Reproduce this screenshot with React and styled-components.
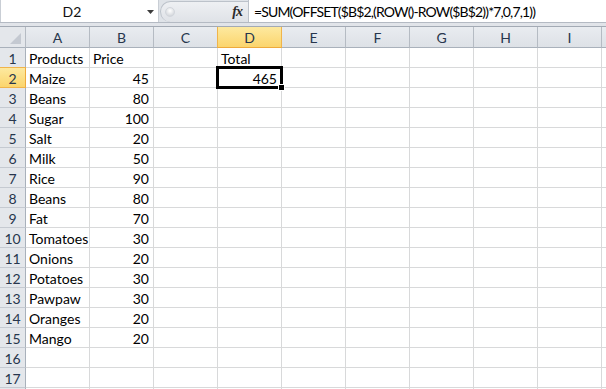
import React from 'react'
import styled, { createGlobalStyle } from 'styled-components'

const columns = ['A', 'B', 'C', 'D', 'E', 'F', 'G', 'H', 'I']

const rows = [
    { a: 'Products', b: 'Price', d: 'Total' },
    { a: 'Maize', b: 45, d: 465 },
    { a: 'Beans', b: 80 },
    { a: 'Sugar', b: 100 },
    { a: 'Salt', b: 20 },
    { a: 'Milk', b: 50 },
    { a: 'Rice', b: 90 },
    { a: 'Beans', b: 80 },
    { a: 'Fat', b: 70 },
    { a: 'Tomatoes', b: 30 },
    { a: 'Onions', b: 20 },
    { a: 'Potatoes', b: 30 },
    { a: 'Pawpaw', b: 30 },
    { a: 'Oranges', b: 20 },
    { a: 'Mango', b: 20 },
    {},
    {},
]

const activeCol = 'D'
const activeRow = 2

const App = () => {

    const cellValue = (row, col) => {
        if (col === 'A') return row.a
        if (col === 'B') return row.b
        if (col === 'D') return row.d
        return undefined
    }

    return (
        <>
            <Global />
            <Window>
                <FormulaBar>
                    <NameBox>
                        <NameText>D2</NameText>
                        <DropButton>
                            <svg width="7" height="4" viewBox="0 0 7 4">
                                <path d="M0 0 H7 L3.5 4 Z" fill="#3c3c3c" />
                            </svg>
                        </DropButton>
                    </NameBox>
                    <Splitter>
                        <Grip />
                        <Fx>fx</Fx>
                    </Splitter>
                    <FormulaInput>=SUM(OFFSET($B$2,(ROW()-ROW($B$2))*7,0,7,1))</FormulaInput>
                </FormulaBar>
                <Strip />
                <Sheet>
                    <Corner>
                        <svg width="11" height="11" viewBox="0 0 11 11">
                            <path d="M11 0 V11 H0 Z" fill="#c4c9d1" />
                        </svg>
                    </Corner>
                    {columns.map(col => (
                        <ColHeader key={col} $active={col === activeCol}>{col}</ColHeader>
                    ))}
                    <ColHeader />
                    {rows.map((row, i) => (
                        <React.Fragment key={i}>
                            <RowHeader $active={i + 1 === activeRow}>{i + 1}</RowHeader>
                            {columns.map(col => {
                                const value = cellValue(row, col)
                                return (
                                    <Cell key={col} $right={typeof value === 'number'}>
                                        {value}
                                    </Cell>
                                )
                            })}
                            <Cell />
                        </React.Fragment>
                    ))}
                    {/* partly visible row below 17 */}
                    <RowHeader />
                    {columns.map(col => <Cell key={col} />)}
                    <Cell />
                    <Selection>
                        <FillHandle />
                    </Selection>
                </Sheet>
            </Window>
        </>
    )
}

export default App

const Global = createGlobalStyle`
    html, body {
        margin: 0;
        padding: 0;
        background: #ffffff;
        overflow: hidden;
    }
    * {
        box-sizing: border-box;
    }
`
const Window = styled.div`
    width: 606px;
    height: 389px;
    overflow: hidden;
    font-family: Lato, "Liberation Sans", sans-serif;
    font-size: 14px;
    color: #000000;
    background: #ffffff;
`
const FormulaBar = styled.div`
    display: flex;
    height: 23px;
    background: #dfe3e8;
    border-bottom: 1px solid #b4bac3;
`
const NameBox = styled.div`
    display: flex;
    align-items: center;
    width: 159px;
    background: #ffffff;
    border-left: 1px solid #c9ced5;
    border-right: 1px solid #c9ced5;
`
const NameText = styled.div`
    flex: 1;
    text-align: center;
    padding-left: 1px;
    color: #111111;
`
const DropButton = styled.div`
    display: flex;
    align-items: center;
    justify-content: center;
    width: 16px;
    height: 100%;
    padding-top: 2px;
`
const Splitter = styled.div`
    display: flex;
    align-items: center;
    justify-content: space-between;
    width: 88px;
    margin: 1px 0 0 1px;
    padding: 0 6px 0 4px;
    border: 1px solid #bcc2ca;
    border-right: none;
    border-bottom: none;
    border-radius: 11px 0 0 11px;
    background: linear-gradient(#eef0f3, #dfe2e7);
`
const Grip = styled.div`
    width: 10px;
    height: 10px;
    border-radius: 50%;
    background: radial-gradient(circle at 50% 35%, #ffffff, #c8ccd2);
    border: 1px solid #d2d6dc;
`
const Fx = styled.span`
    font-family: "Liberation Serif", serif;
    font-style: italic;
    font-weight: bold;
    font-size: 14px;
    color: #2a2a2a;
    letter-spacing: -1px;
`
const FormulaInput = styled.div`
    flex: 1;
    display: flex;
    align-items: center;
    padding-left: 5px;
    letter-spacing: -0.85px;
    background: #ffffff;
    border-left: 1px solid #bcc2ca;
    white-space: nowrap;
    overflow: hidden;
`
const Strip = styled.div`
    height: 4px;
    background: #e1e4e9;
    border-bottom: 1px solid #a3aab4;
`
const Sheet = styled.div`
    position: relative;
    display: grid;
    grid-template-columns: 26px repeat(9, 64px) 1fr;
    grid-template-rows: 21px;
    grid-auto-rows: 20px;
`
const Corner = styled.div`
    display: flex;
    align-items: flex-end;
    justify-content: flex-end;
    padding: 0 4px 3px 0;
    background: #e4e7eb;
    border-right: 1px solid #b5bbc3;
    border-bottom: 1px solid #a9b1bb;
`
const ColHeader = styled.div`
    display: flex;
    align-items: center;
    justify-content: center;
    padding-top: 1px;
    color: #27364d;
    background: ${props => props.$active
        ? 'linear-gradient(#fde99f, #fbd56d)'
        : 'linear-gradient(#e9ecf0, #dde1e6)'};
    border-right: 1px solid ${props => props.$active ? '#f0b44b' : '#b5bbc3'};
    border-bottom: 1px solid ${props => props.$active ? '#eeaa3c' : '#a9b1bb'};
    border-left: ${props => props.$active ? '1px solid #f0b44b' : 'none'};
    margin-left: ${props => props.$active ? '-1px' : '0'};
`
const RowHeader = styled.div`
    display: flex;
    align-items: center;
    justify-content: center;
    padding-top: 1px;
    color: #27364d;
    background: ${props => props.$active
        ? 'linear-gradient(#fde99f, #fbd56d)'
        : '#e4e7eb'};
    border-right: 1px solid ${props => props.$active ? '#eeaa3c' : '#a9b1bb'};
    border-bottom: 1px solid ${props => props.$active ? '#f0b44b' : '#c5cad1'};
    border-top: ${props => props.$active ? '1px solid #f0b44b' : 'none'};
    margin-top: ${props => props.$active ? '-1px' : '0'};
`
const Cell = styled.div`
    display: flex;
    align-items: center;
    justify-content: ${props => props.$right ? 'flex-end' : 'flex-start'};
    padding: 1px 4px 0 3px;
    white-space: nowrap;
    overflow: visible;
    border-right: 1px solid #d8d9da;
    border-bottom: 1px solid #d8d9da;
`
const Selection = styled.div`
    position: absolute;
    left: 216px;
    top: 39px;
    width: 67px;
    height: 23px;
    border: 3px solid #000000;
    pointer-events: none;
`
const FillHandle = styled.div`
    position: absolute;
    right: -5px;
    bottom: -5px;
    width: 7px;
    height: 7px;
    background: #000000;
    border: 1px solid #ffffff;
`
